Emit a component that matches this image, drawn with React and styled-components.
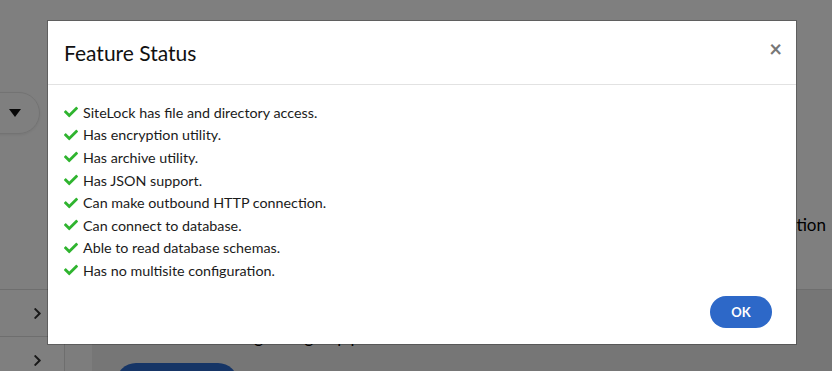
import React from 'react'
import styled, { createGlobalStyle } from 'styled-components'
import { FaCheck, FaChevronRight } from 'react-icons/fa'

const GlobalStyle = createGlobalStyle`
    html, body {
        margin: 0;
        padding: 0;
    }
    body {
        font-family: "Lato", "Liberation Sans", sans-serif;
        color: #1b1b1b;
        background: #ffffff;
    }
`

const features = [
    'SiteLock has file and directory access.',
    'Has encryption utility.',
    'Has archive utility.',
    'Has JSON support.',
    'Can make outbound HTTP connection.',
    'Can connect to database.',
    'Able to read database schemas.',
    'Has no multisite configuration.',
]

export default function App() {
    return (
        <>
            <GlobalStyle />
            <Page>
                <TopSection>
                    <DropdownPill>
                        <Caret />
                    </DropdownPill>
                    <SideText>Enable Protection</SideText>
                </TopSection>
                <BottomSection>
                    <Sidebar>
                        <SideRow><FaChevronRight /></SideRow>
                        <SideRow><FaChevronRight /></SideRow>
                    </Sidebar>
                    <Gutter />
                    <Main>
                        <MainText>Scan settings and group permissions</MainText>
                        <PrimaryButton aria-label="Save" />
                    </Main>
                </BottomSection>

                <Overlay>
                    <Modal>
                        <Header>
                            <Title>Feature Status</Title>
                            <CloseButton>×</CloseButton>
                        </Header>
                        <Body>
                            <List>
                                {features.map((f) => (
                                    <Item key={f}>
                                        <CheckIcon><FaCheck /></CheckIcon>
                                        {f}
                                    </Item>
                                ))}
                            </List>
                        </Body>
                        <Footer>
                            <OkButton>OK</OkButton>
                        </Footer>
                    </Modal>
                </Overlay>
            </Page>
        </>
    )
}

const Page = styled.div`
    position: relative;
    width: 832px;
    height: 371px;
    overflow: hidden;
    display: flex;
    flex-direction: column;
`

const TopSection = styled.div`
    height: 289px;
    flex: none;
    display: flex;
    align-items: flex-start;
    justify-content: space-between;
    padding-top: 92px;
    box-sizing: border-box;
`

const DropdownPill = styled.div`
    width: 60px;
    height: 42px;
    margin-left: -20px;
    border-radius: 21px;
    border: 1px solid #e6e6e6;
    box-shadow: 0 1px 3px rgba(0, 0, 0, 0.08);
    display: flex;
    align-items: center;
    justify-content: flex-end;
    padding-right: 18px;
    box-sizing: border-box;
`

const Caret = styled.span`
    width: 0;
    height: 0;
    border-left: 6px solid transparent;
    border-right: 6px solid transparent;
    border-top: 8px solid #111;
`

const SideText = styled.span`
    margin-top: 122px;
    margin-right: 6px;
    font-size: 17px;
    color: #000;
    white-space: nowrap;
`

const BottomSection = styled.div`
    flex: 1;
    display: grid;
    grid-template-columns: 64px 28px 1fr;
    border-top: 1px solid #dcdcdc;
`

const Sidebar = styled.div`
    display: flex;
    flex-direction: column;
`

const SideRow = styled.div`
    height: 46px;
    flex: none;
    display: flex;
    align-items: center;
    justify-content: flex-end;
    padding-right: 20px;
    border-bottom: 1px solid #dcdcdc;
    color: #333;
    font-size: 13px;
`

const Gutter = styled.div`
    border-left: 1px solid #dcdcdc;
    background: #fafafa;
`

const Main = styled.div`
    background: #ededed;
    padding: 36px 0 0 24px;
    display: flex;
    flex-direction: column;
    align-items: flex-start;
    gap: 16px;
`

const MainText = styled.div`
    font-size: 17px;
    color: #000;
    padding-left: 60px;
    letter-spacing: -0.3px;
`

const PrimaryButton = styled.button`
    width: 122px;
    height: 40px;
    border: none;
    border-radius: 20px;
    background: #2c6acc;
`

const Overlay = styled.div`
    position: absolute;
    inset: 0;
    background: rgba(0, 0, 0, 0.5);
    padding: 21px 0 0 48px;
    box-sizing: border-box;
`

const Modal = styled.div`
    width: 748px;
    height: 323px;
    background: #fff;
    box-shadow: 0 0 0 1px rgba(0, 0, 0, 0.25);
    display: flex;
    flex-direction: column;
`

const Header = styled.div`
    height: 64px;
    flex: none;
    display: flex;
    align-items: center;
    justify-content: space-between;
    padding: 0 16px;
    border-bottom: 1px solid #e2e2e2;
    box-sizing: border-box;
`

const Title = styled.h2`
    margin: 0;
    font-size: 21px;
    font-weight: 400;
    color: #111;
`

const CloseButton = styled.span`
    font-size: 22px;
    color: #777;
    font-weight: 700;
    line-height: 1;
    margin-top: -8px;
    margin-right: -2px;
`

const Body = styled.div`
    flex: 1;
    padding: 16px 16px 0;
`

const List = styled.ul`
    list-style: none;
    margin: 0;
    padding: 0;
`

const Item = styled.li`
    display: flex;
    align-items: center;
    height: 22.6px;
    font-size: 14.3px;
    color: #1b1b1b;
`

const CheckIcon = styled.span`
    display: inline-flex;
    color: #2fb42f;
    font-size: 14px;
    margin-right: 5px;
`

const Footer = styled.div`
    display: flex;
    justify-content: flex-end;
    padding: 0 24px 16px;
`

const OkButton = styled.button`
    width: 62px;
    height: 32px;
    border: none;
    border-radius: 16px;
    background: #2d68c8;
    color: #fff;
    font-family: inherit;
    font-size: 13px;
    font-weight: 700;
`
